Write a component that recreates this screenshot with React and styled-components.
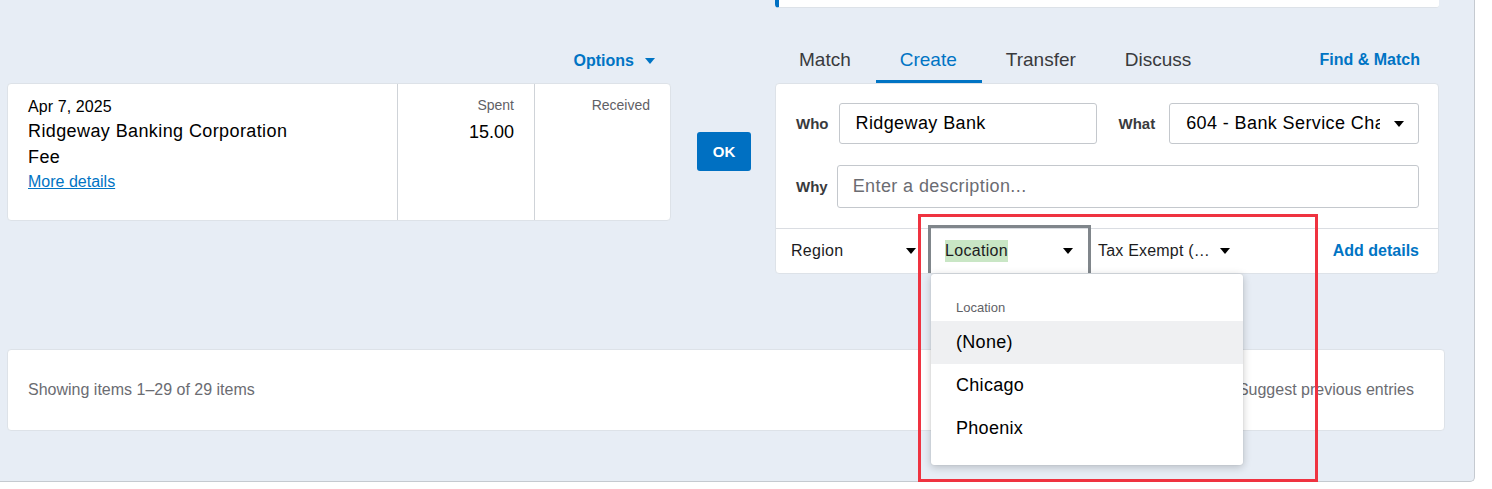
import React from "react";
import styled, { createGlobalStyle } from "styled-components";

const BLUE = "#0074c4";
const INK = "#393a3d";

const GlobalStyle = createGlobalStyle`
  body {
    margin: 0;
    background: #fff;
    font-family: "Liberation Sans", Arial, sans-serif;
    color: #000;
  }
  * { box-sizing: border-box; }
`;

const Frame = styled.div`
  width: 1475px;
  height: 482px;
  background: #e7edf5;
  border-right: 1px solid #c5cad0;
  border-bottom: 1px solid #c5cad0;
  border-bottom-right-radius: 5px;
  padding-left: 7px;
`;

const TopRow = styled.div`
  display: flex;
  align-items: flex-start;
`;

const LeftCol = styled.div`
  width: 664px;
`;

const OptionsBar = styled.div`
  height: 83px;
  padding: 38px 16px 0 0;
  display: flex;
  justify-content: flex-end;
  align-items: center;
`;

const LinkButton = styled.span`
  display: inline-flex;
  align-items: center;
  gap: 11px;
  font-size: 16px;
  font-weight: bold;
  color: ${BLUE};
  line-height: 45px;
`;

const Caret = styled.span`
  display: inline-block;
  width: 0;
  height: 0;
  border-left: 5px solid transparent;
  border-right: 5px solid transparent;
  border-top: 6px solid ${(p) => p.$color || "#000"};
  flex-shrink: 0;
`;

const Card = styled.div`
  background: #fff;
  border: 1px solid #dde2e8;
  border-radius: 4px;
`;

const TxnCard = styled(Card)`
  height: 138px;
  display: grid;
  grid-template-columns: 389px 137px 1fr;
`;

const TxnCell = styled.div`
  padding: 12px 20px 0;
  border-left: ${(p) => (p.$first ? "none" : "1px solid #cfd3d8")};
  text-align: ${(p) => (p.$right ? "right" : "left")};
`;

const DateLine = styled.div`
  font-size: 16px;
  line-height: 22px;
  letter-spacing: 0.1px;
`;

const NameLine = styled.div`
  font-size: 18px;
  line-height: 26px;
  letter-spacing: 0.4px;
`;

const MoreLink = styled.a`
  display: block;
  font-size: 16px;
  line-height: 24px;
  color: ${BLUE};
  text-decoration: underline;
`;

const ColHead = styled.div`
  font-size: 14px;
  line-height: 18px;
  color: #5f6166;
`;

const Amount = styled.div`
  margin-top: 5px;
  font-size: 18px;
  line-height: 26px;
`;

const Middle = styled.div`
  width: 104px;
  padding: 132px 0 0 26px;
`;

const OkButton = styled.button`
  width: 54px;
  height: 39px;
  border: none;
  border-radius: 3px;
  background: #0070c2;
  color: #fff;
  font-family: inherit;
  font-size: 15px;
  font-weight: bold;
`;

const RightCol = styled.div`
  width: 664px;
`;

const PrevCard = styled.div`
  height: 8px;
  background: #fff;
  border-left: 4px solid #0070c2;
  border-bottom: 1px solid #dde2e8;
  border-bottom-left-radius: 4px;
  border-bottom-right-radius: 3px;
`;

const Tabs = styled.div`
  margin-top: 37px;
  height: 38px;
  display: flex;
`;

const Tab = styled.div`
  padding: 0 25px 8px 24px;
  height: 38px;
  display: flex;
  align-items: center;
  font-size: 19px;
  color: ${(p) => (p.$active ? BLUE : INK)};
  box-shadow: ${(p) => (p.$active ? `inset 0 -3px 0 ${BLUE}` : "none")};
`;

const TabLink = styled(Tab)`
  margin-left: auto;
  padding-right: 19px;
  font-size: 16px;
  font-weight: bold;
  color: ${BLUE};
`;

const CreateCard = styled(Card)`
  height: 191px;
  display: flex;
  flex-direction: column;
`;

const Fields = styled.div`
  padding: 19px 19px 0 20px;
  display: flex;
  flex-direction: column;
  gap: 21px;
`;

const FieldRow = styled.div`
  display: flex;
  align-items: center;
`;

const Label = styled.label`
  font-size: 15px;
  font-weight: bold;
  color: ${INK};
  margin: 0 ${(p) => p.$gap || 9}px 0 ${(p) => p.$lead || 0}px;
`;

const TextInput = styled.input`
  width: ${(p) => p.$w || "auto"};
  flex: ${(p) => (p.$w ? "none" : 1)};
  min-width: 0;
  height: ${(p) => p.$h || 41}px;
  border: 1px solid #c4c8cd;
  border-radius: 3px;
  padding: 0 0 0 15px;
  font-family: inherit;
  font-size: 18px;
  letter-spacing: 0.4px;
  color: #000;
  outline: none;
  &::placeholder {
    color: #6b6c72;
  }
`;

const SelectBox = styled.div`
  flex: 1;
  min-width: 0;
  height: 41px;
  border: 1px solid #c4c8cd;
  border-radius: 3px;
  padding: 0 14px 0 16px;
  display: flex;
  align-items: center;
  font-size: 18px;
  letter-spacing: 0.4px;
`;

const SelectText = styled.span`
  flex: 1;
  min-width: 0;
  white-space: nowrap;
  overflow: hidden;
  margin-right: 14px;
`;

const DetailsBar = styled.div`
  margin-top: auto;
  height: 45px;
  border-top: 1px solid #dadde2;
  display: flex;
  align-items: center;
`;

const DetailSelect = styled.div`
  width: ${(p) => p.$w}px;
  padding: 0 12px 0 15px;
  display: flex;
  align-items: center;
  justify-content: space-between;
  font-size: 16px;
  letter-spacing: 0.3px;
  color: #1c1c1e;
`;

const LocationWrap = styled.div`
  position: relative;
  align-self: flex-start;
  margin-top: -4px;
  width: 163px;
  height: 48px;
  border: 3px solid #80868b;
  border-bottom: none;
  padding: 0 15px 0 14px;
  display: flex;
  align-items: center;
  justify-content: space-between;
  font-size: 16px;
  letter-spacing: 0.3px;
  color: #1c1c1e;
`;

const Highlight = styled.span`
  background: #c9e6c5;
  padding: 2px 0;
`;

const TaxSelect = styled.div`
  margin-left: 7px;
  display: flex;
  align-items: center;
  gap: 10px;
  font-size: 16px;
  letter-spacing: 0.2px;
  color: #1c1c1e;
`;

const AddDetails = styled.span`
  margin-left: auto;
  padding-right: 19px;
  font-size: 16px;
  font-weight: bold;
  color: ${BLUE};
`;

const Menu = styled.div`
  position: absolute;
  left: 0;
  top: 46px;
  width: 312px;
  background: #fff;
  border-radius: 3px;
  box-shadow: 0 2px 8px rgba(0, 0, 0, 0.22), 0 0 1px rgba(0, 0, 0, 0.2);
  padding: 24px 0 15px;
  z-index: 2;
  letter-spacing: normal;
`;

const MenuHead = styled.div`
  padding-left: 25px;
  font-size: 13px;
  line-height: 20px;
  color: #5f6166;
  margin-bottom: 3px;
`;

const MenuItem = styled.div`
  height: 43px;
  padding-left: 25px;
  display: flex;
  align-items: center;
  font-size: 18px;
  letter-spacing: 0.3px;
  color: #000;
  background: ${(p) => (p.$hover ? "#eff0f2" : "transparent")};
`;

const Annotation = styled.div`
  position: absolute;
  left: -13px;
  top: -14px;
  width: 400px;
  height: 268px;
  border: 3px solid #ef3340;
  z-index: 3;
  pointer-events: none;
`;

const Footer = styled(Card)`
  margin-top: 75px;
  width: 1438px;
  height: 82px;
  padding: 0 30px 0 20px;
  display: flex;
  align-items: center;
  justify-content: space-between;
  font-size: 16px;
  color: #6b6c72;
`;

const App = () => {
  return (
    <>
      <GlobalStyle />
      <Frame>
        <TopRow>
          <LeftCol>
            <OptionsBar>
              <LinkButton>
                Options
                <Caret $color={BLUE} />
              </LinkButton>
            </OptionsBar>
            <TxnCard>
              <TxnCell $first>
                <DateLine>Apr 7, 2025</DateLine>
                <NameLine>Ridgeway Banking Corporation</NameLine>
                <NameLine>Fee</NameLine>
                <MoreLink>More details</MoreLink>
              </TxnCell>
              <TxnCell $right>
                <ColHead>Spent</ColHead>
                <Amount>15.00</Amount>
              </TxnCell>
              <TxnCell $right>
                <ColHead>Received</ColHead>
              </TxnCell>
            </TxnCard>
          </LeftCol>

          <Middle>
            <OkButton>OK</OkButton>
          </Middle>

          <RightCol>
            <PrevCard />
            <Tabs>
              <Tab>Match</Tab>
              <Tab $active>Create</Tab>
              <Tab>Transfer</Tab>
              <Tab>Discuss</Tab>
              <TabLink>Find &amp; Match</TabLink>
            </Tabs>
            <CreateCard>
              <Fields>
                <FieldRow>
                  <Label $gap={11}>Who</Label>
                  <TextInput $w="258px" readOnly value="Ridgeway Bank" />
                  <Label $lead={21} $gap={14}>
                    What
                  </Label>
                  <SelectBox>
                    <SelectText>604 - Bank Service Charges</SelectText>
                    <Caret />
                  </SelectBox>
                </FieldRow>
                <FieldRow>
                  <Label>Why</Label>
                  <TextInput $h={43} readOnly placeholder="Enter a description..." />
                </FieldRow>
              </Fields>
              <DetailsBar>
                <DetailSelect $w={152}>
                  Region
                  <Caret />
                </DetailSelect>
                <LocationWrap>
                  <Highlight>Location</Highlight>
                  <Caret />
                  <Menu>
                    <MenuHead>Location</MenuHead>
                    <MenuItem $hover>(None)</MenuItem>
                    <MenuItem>Chicago</MenuItem>
                    <MenuItem>Phoenix</MenuItem>
                  </Menu>
                  <Annotation />
                </LocationWrap>
                <TaxSelect>
                  Tax Exempt (…
                  <Caret />
                </TaxSelect>
                <AddDetails>Add details</AddDetails>
              </DetailsBar>
            </CreateCard>
          </RightCol>
        </TopRow>

        <Footer>
          <span>Showing items 1–29 of 29 items</span>
          <span>Suggest previous entries</span>
        </Footer>
      </Frame>
    </>
  );
};

export default App;
